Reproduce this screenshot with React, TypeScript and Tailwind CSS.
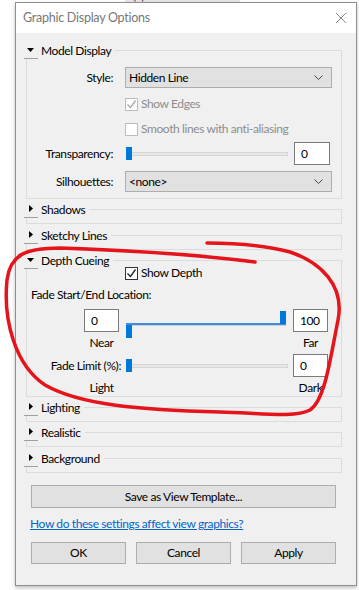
import React from 'react';

const ArrowDown = () => (
  <svg width="8" height="5" viewBox="0 0 8 5"><path d="M0 0h7L3.5 4z" fill="#000" /></svg>
);
const ArrowRight = () => (
  <svg width="5" height="8" viewBox="0 0 5 8"><path d="M0 0v7l4-3.5z" fill="#000" /></svg>
);
const Chevron = () => (
  <svg width="9" height="5" viewBox="0 0 9 5"><path d="M0.5 0.5l4 4 4-4" fill="none" stroke="#444" strokeWidth="1" /></svg>
);

function Check({ checked, disabled }: { checked?: boolean; disabled?: boolean }) {
  return (
    <span className={`w-[13px] h-[13px] border flex items-center justify-center shrink-0 bg-white ${disabled ? 'border-[#bcbcbc]' : 'border-[#333]'}`}>
      {checked && (
        <svg width="11" height="11" viewBox="0 0 11 11">
          <path d="M1.5 5.5l3 3 5-7" fill="none" stroke={disabled ? '#a8a8a8' : '#222'} strokeWidth="1.3" />
        </svg>
      )}
    </span>
  );
}

function Group({ title, open, className, children }: { title: string; open?: boolean; className: string; children?: React.ReactNode }) {
  return (
    <div className={`relative ml-[10px] mr-[14px] border border-[#dcdcdc] ${className}`}>
      <div className="absolute -top-[9px] -left-[3px] flex items-center bg-[#f0f0f0] pr-[4px] h-[17px]">
        <span className="w-[14px] h-[17px] border-b border-[#a0a0a0] flex items-center justify-center">
          {open ? <ArrowDown /> : <ArrowRight />}
        </span>
        <span className="ml-[3px]">{title}</span>
      </div>
      {children}
    </div>
  );
}

function Select({ value }: { value: string }) {
  return (
    <div className="w-[207px] h-[21px] bg-[#e1e1e1] border border-[#adadad] flex items-center justify-between pl-[3px] pr-[8px]">
      <span>{value}</span>
      <Chevron />
    </div>
  );
}

function Input({ value, w = 'w-[35px]' }: { value: string; w?: string }) {
  return (
    <div className={`${w} h-[23px] bg-white border border-[#7a7a7a] flex items-center pl-[6px] shrink-0`}>{value}</div>
  );
}

function Slider({ w }: { w: string }) {
  return (
    <div className={`relative ${w} h-[15px] flex items-center shrink-0`}>
      <div className="w-full h-[4px] bg-[#e7e7e7] border border-[#d6d6d6]" />
      <div className="absolute left-0 top-[1px] w-[6px] h-[13px] bg-[#0078d7]" />
    </div>
  );
}

export default function App() {
  return (
    <div className="relative w-[359px] h-[590px] bg-white overflow-hidden text-[12px] leading-[16px] tracking-[-0.4px] text-black font-['Lato','Noto_Sans',sans-serif]">
      <div className="ml-[125px] w-[115px] h-[2px] bg-[#e6e6e6] overflow-hidden">
        <div className="-mt-[11px] pl-[8px] text-[11px] leading-[13px] text-[#333]">(E) NEIGHBORING</div>
      </div>
      <div className="ml-[15px] w-[342px] h-[584px] border border-[#8f8f8f] bg-[#f0f0f0] shadow-[0_2px_4px_rgba(0,0,0,0.25)] flex flex-col">
        <div className="h-[30px] bg-white flex items-center justify-between pl-[7px] pr-[9px]">
          <span className="text-[#777] text-[12.5px] tracking-[-0.25px]">Graphic Display Options</span>
          <svg width="12" height="12" viewBox="0 0 12 12"><path d="M1 1l10 10M11 1L1 11" stroke="#888" strokeWidth="1" /></svg>
        </div>

        <Group title="Model Display" open className="mt-[17px] h-[149px]">
          <div className="flex items-center mt-[16px]">
            <span className="w-[86px] text-right">Style:</span>
            <span className="ml-[12px]"><Select value="Hidden Line" /></span>
          </div>
          <div className="flex items-center mt-[9px] pl-[98px] h-[14px] text-[#8d8d8d]">
            <Check checked disabled />
            <span className="ml-[3px]">Show Edges</span>
          </div>
          <div className="flex items-center mt-[11px] pl-[98px] h-[14px] text-[#8d8d8d]">
            <Check disabled />
            <span className="ml-[3px]">Smooth lines with anti-aliasing</span>
          </div>
          <div className="flex items-center mt-[6px]">
            <span className="w-[86px] text-right">Transparency:</span>
            <span className="ml-[13px]"><Slider w="w-[162px]" /></span>
            <span className="ml-[6px]"><Input value="0" w="w-[36px]" /></span>
          </div>
          <div className="flex items-center mt-[6px]">
            <span className="w-[86px] text-right">Silhouettes:</span>
            <span className="ml-[12px]"><Select value="<none>" /></span>
          </div>
        </Group>

        <Group title="Shadows" className="mt-[10px] h-[15px]" />
        <Group title="Sketchy Lines" className="mt-[11px] h-[15px]" />

        <Group title="Depth Cueing" open className="mt-[10px] h-[137px]">
          <div className="flex items-center mt-[5px] pl-[98px] h-[14px]">
            <Check checked />
            <span className="ml-[3px]">Show Depth</span>
          </div>
          <div className="mt-[7px] pl-[4px]">Fade Start/End Location:</div>
          <div className="flex items-center mt-[6px] pl-[57px]">
            <Input value="0" />
            <div className="relative ml-[7px] w-[160px] h-[23px] shrink-0">
              <div className="absolute left-0 right-0 top-[14px] h-[3px] bg-[#3c8fe0] border-b border-[#d0d0d0]" />
              <div className="absolute right-0 top-[2px] w-[6px] h-[13px] bg-[#0078d7]" />
              <div className="absolute left-0 top-[16px] w-[6px] h-[13px] bg-[#0078d7]" />
            </div>
            <span className="ml-[7px]"><Input value="100" /></span>
          </div>
          <div className="flex mt-[3px] pl-[57px]">
            <span className="w-[35px] text-center">Near</span>
            <span className="ml-[174px] w-[35px] text-center">Far</span>
          </div>
          <div className="flex items-center mt-[3px]">
            <span className="w-[94px] text-right">Fade Limit (%):</span>
            <span className="ml-[5px]"><Slider w="w-[162px]" /></span>
            <span className="ml-[5px]"><Input value="0" /></span>
          </div>
          <div className="flex mt-[3px] pl-[57px]">
            <span className="w-[35px] text-center">Light</span>
            <span className="ml-[174px] w-[35px] text-center">Dark</span>
          </div>
        </Group>

        <Group title="Lighting" className="mt-[10px] h-[15px]" />
        <Group title="Realistic" className="mt-[10px] h-[15px]" />
        <Group title="Background" className="mt-[11px] h-[15px]" />

        <button className="mt-[12px] ml-[15px] w-[305px] h-[23px] bg-[#e1e1e1] border border-[#adadad]">
          Save as View Template...
        </button>
        <a className="mt-[8px] ml-[14px] text-[#0066cc] underline self-start">How do these settings affect view graphics?</a>
        <div className="flex mt-[10px] ml-[15px] gap-[10px]">
          <button className="w-[95px] h-[22px] bg-[#e1e1e1] border border-[#adadad]">OK</button>
          <button className="w-[95px] h-[22px] bg-[#e1e1e1] border border-[#adadad]">Cancel</button>
          <button className="w-[95px] h-[22px] bg-[#e1e1e1] border border-[#adadad]">Apply</button>
        </div>
      </div>

      <svg className="absolute inset-0 pointer-events-none" width="359" height="590" viewBox="0 0 359 590">
        <path
          d="M255 262 C200 255, 120 250, 60 248 C25 248, 10 255, 7 280 C3 320, 15 365, 45 385 C80 405, 140 410, 220 412 C260 413, 295 418, 310 410 C325 400, 330 360, 338 320 C345 285, 320 262, 290 252 C260 244, 230 243, 207 243"
          fill="none"
          stroke="#e5141b"
          strokeWidth="3.5"
          strokeLinecap="round"
        />
      </svg>
    </div>
  );
}
